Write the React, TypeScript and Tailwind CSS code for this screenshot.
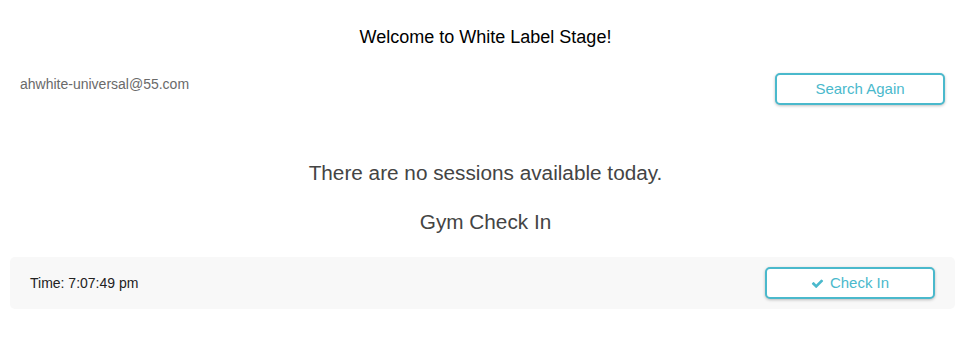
const btn =
  "w-[170px] h-[32px] flex items-center justify-center gap-[6px] rounded-[5px] border-2 border-[#4ab9cc] bg-white text-[15px] text-[#4ab9cc] shadow-[0_1px_3px_rgba(0,0,0,0.25)]";

const CheckIcon = () => (
  <svg width="13" height="13" viewBox="0 0 1792 1792" fill="currentColor">
    <path d="M1671 566q0 40-28 68l-724 724-136 136q-28 28-68 28t-68-28l-136-136-362-362q-28-28-28-68t28-68l136-136q28-28 68-28t68 28l294 295 656-657q28-28 68-28t68 28l136 136q28 28 28 68z" />
  </svg>
);

export default function App() {
  return (
    <div className="w-[971px] h-[345px] bg-white font-['Liberation_Sans',Arial,sans-serif]">
      {/* Header */}
      <div className="pt-[27px] text-center text-[18px] leading-[20px] text-black">
        Welcome to White Label Stage!
      </div>

      <div className="mt-[26px] flex items-start justify-between pl-[20px] pr-[26px]">
        <div className="pt-[3px] text-[14px] leading-[16px] text-[#6a6a6a]">
          ahwhite-universal@55.com
        </div>
        <button className={btn}>Search Again</button>
      </div>

      <div className="mt-[56px] text-center text-[20.75px] leading-[24px] text-[#444]">
        There are no sessions available today.
      </div>
      <div className="mt-[25px] text-center text-[20.75px] leading-[24px] text-[#444]">
        Gym Check In
      </div>

      {/* Check in bar */}
      <div className="ml-[10px] mr-[16px] mt-[23px] h-[52px] flex items-center justify-between rounded-[5px] bg-[#f8f8f8] pl-[20px] pr-[20px]">
        <div className="text-[14px] text-[#222]">Time: 7:07:49 pm</div>
        <button className={btn}>
          <CheckIcon />
          Check In
        </button>
      </div>
    </div>
  );
}
